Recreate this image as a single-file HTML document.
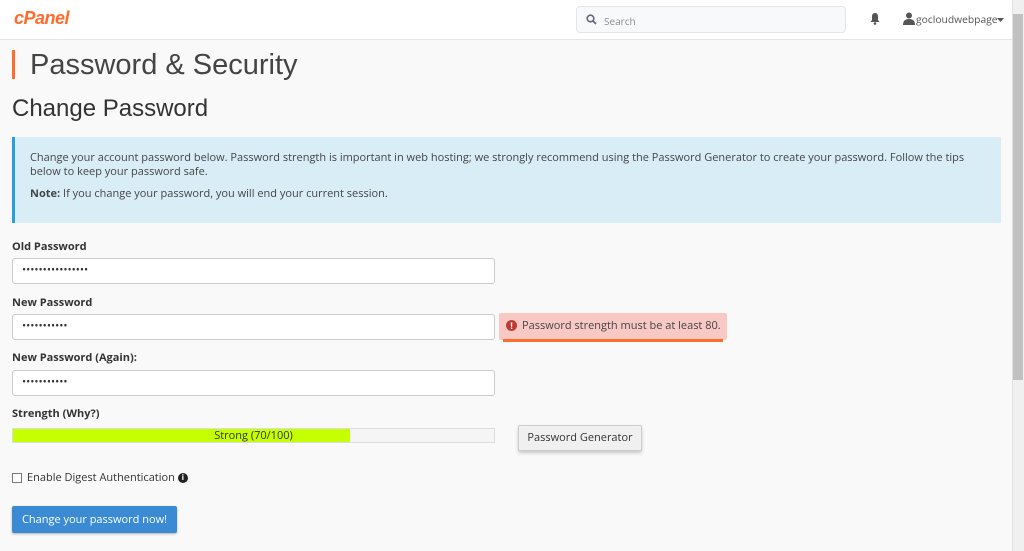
<!DOCTYPE html>
<html><head><style>
*{box-sizing:border-box;margin:0;padding:0}
body{width:1024px;height:551px;overflow:hidden;background:#f9f9f9;font-family:"Open Sans","Liberation Sans",sans-serif;color:#333;position:relative}
.hdr{position:absolute;left:0;top:0;width:1012px;height:40px;background:#fff;border-bottom:1px solid #e5e5e5}
.logo{position:absolute;left:14px;top:8px;font:italic bold 18px "Liberation Sans",sans-serif;color:#ff6c2c;letter-spacing:-0.5px}
.search{position:absolute;left:576px;top:6px;width:270px;height:27px;border:1px solid #e2e6ea;border-radius:4px;background:#f8f9fb}
.search span{position:absolute;left:27px;top:7px;font-size:10px;color:#8a8f95}
.user{position:absolute;left:916px;top:13px;font-size:10.3px;color:#555}
.scroll{position:absolute;right:0;top:0;width:12px;height:551px;background:#f0f0f0;border-left:1px solid #e0e0e0}
.thumb{position:absolute;right:1px;top:14px;width:10px;height:366px;background:#c1c1c1}
.bar{position:absolute;left:12px;top:50px;width:3px;height:29px;background:#ff6c2c}
h1{position:absolute;left:30px;top:49px;font-size:29px;color:#444;font-family:"Liberation Sans",sans-serif;font-weight:normal}
h2{position:absolute;left:12px;top:95px;font-size:24px;font-weight:normal;color:#333;font-family:"Liberation Sans",sans-serif}
.info{position:absolute;left:12px;top:137px;width:989px;height:86px;background:#d9edf7;border-left:3px solid #2b9fd9;padding:14px 15px;font-size:11px;line-height:14px;color:#444}
.info p{margin-bottom:8px}
.lbl{position:absolute;left:12px;font-size:11px;font-weight:bold;color:#333}
.inp{position:absolute;left:12px;width:483px;height:26px;background:#fff;border:1px solid #ccc;border-radius:3px;padding:3px 9px;font-size:11px;letter-spacing:0}
.prog{position:absolute;left:12px;top:428px;width:483px;height:15px;border:1px solid #ddd;background:#f5f5f5}
.fill{position:absolute;left:0;top:0;width:337px;height:13px;background:#c6ff00}
.prog span{position:absolute;left:0;width:100%;text-align:center;top:0;font-size:11px;line-height:13px;color:#333}
.gen{position:absolute;left:518px;top:425px;width:124px;height:26px;border:1px solid #ccc;background:#f0f0f0;box-shadow:0 2px 3px rgba(0,0,0,.2);font-size:11px;text-align:center;line-height:24px;border-radius:2px}
.err{position:absolute;left:499px;top:313px;width:228px;height:27px;background:#f8c9c4;border-radius:2px;font-size:11px;line-height:25px;padding-left:23px;color:#444}
.err::after{content:"";position:absolute;left:4px;right:4px;bottom:-2px;height:3px;background:#ff6c2c}
.err i{position:absolute;left:7px;top:7px;width:11px;height:11px;border-radius:50%;background:#c03a35;color:#fff;font-style:normal;font-size:9px;font-weight:bold;line-height:11px;text-align:center}
.cb{position:absolute;left:12px;top:473px;width:10px;height:10px;border:1px solid #777;background:#fff}
.cbt{position:absolute;left:27px;top:470px;font-size:11px}
.ii{display:inline-block;width:10px;height:10px;border-radius:50%;background:#222;color:#fff;font-size:8px;font-weight:bold;text-align:center;line-height:10px;margin-left:3px;vertical-align:1px}
.btn{position:absolute;left:12px;top:506px;width:165px;height:27px;background:#3a8bd3;border-radius:2px;box-shadow:0 1px 2px rgba(0,0,0,.3);color:#fff;font-size:11px;text-align:center;line-height:27px}
</style></head><body>
<div class="hdr">
<div class="logo">cPanel</div>
<div class="search"><svg style="position:absolute;left:9px;top:7px" width="11" height="11" viewBox="0 0 11 11"><circle cx="4.5" cy="4.5" r="3.3" fill="none" stroke="#667" stroke-width="1.6"/><path d="M7 7l3 3" stroke="#667" stroke-width="1.8"/></svg><span>Search</span></div>
<svg style="position:absolute;left:869px;top:12px" width="12" height="13" viewBox="0 0 12 13"><path d="M6 1C3.5 1 3 3 3 5v3L1.5 10h9L9 8V5C9 3 8.5 1 6 1z" fill="#555"/><circle cx="6" cy="11.5" r="1.3" fill="#555"/></svg>
<svg style="position:absolute;left:903px;top:12px" width="12" height="13" viewBox="0 0 12 13"><circle cx="6" cy="3.5" r="3" fill="#555"/><path d="M0 13c0-4 2-6 6-6s6 2 6 6z" fill="#555"/></svg>
<div class="user">gocloudwebpage</div>
<svg style="position:absolute;left:997px;top:18px" width="7" height="4"><path d="M0 0h7L3.5 4z" fill="#555"/></svg>
</div>
<div class="scroll"><div class="thumb"></div></div>
<div class="bar"></div>
<h1>Password &amp; Security</h1>
<h2>Change Password</h2>
<div class="info"><p>Change your account password below. Password strength is important in web hosting; we strongly recommend using the Password Generator to create your password. Follow the tips below to keep your password safe.</p><p><b>Note:</b> If you change your password, you will end your current session.</p></div>
<div class="lbl" style="top:239px">Old Password</div>
<div class="inp" style="top:258px">••••••••••••••••</div>
<div class="lbl" style="top:295px">New Password</div>
<div class="inp" style="top:314px">•••••••••••</div>
<div class="err"><i>!</i>Password strength must be at least 80.</div>
<div class="lbl" style="top:350px">New Password (Again):</div>
<div class="inp" style="top:370px">•••••••••••</div>
<div class="lbl" style="top:406px">Strength (Why?)</div>
<div class="prog"><div class="fill"></div><span>Strong (70/100)</span></div>
<div class="gen">Password Generator</div>
<div class="cb"></div>
<div class="cbt">Enable Digest Authentication<span class="ii">i</span></div>
<div class="btn">Change your password now!</div>
</body></html>
